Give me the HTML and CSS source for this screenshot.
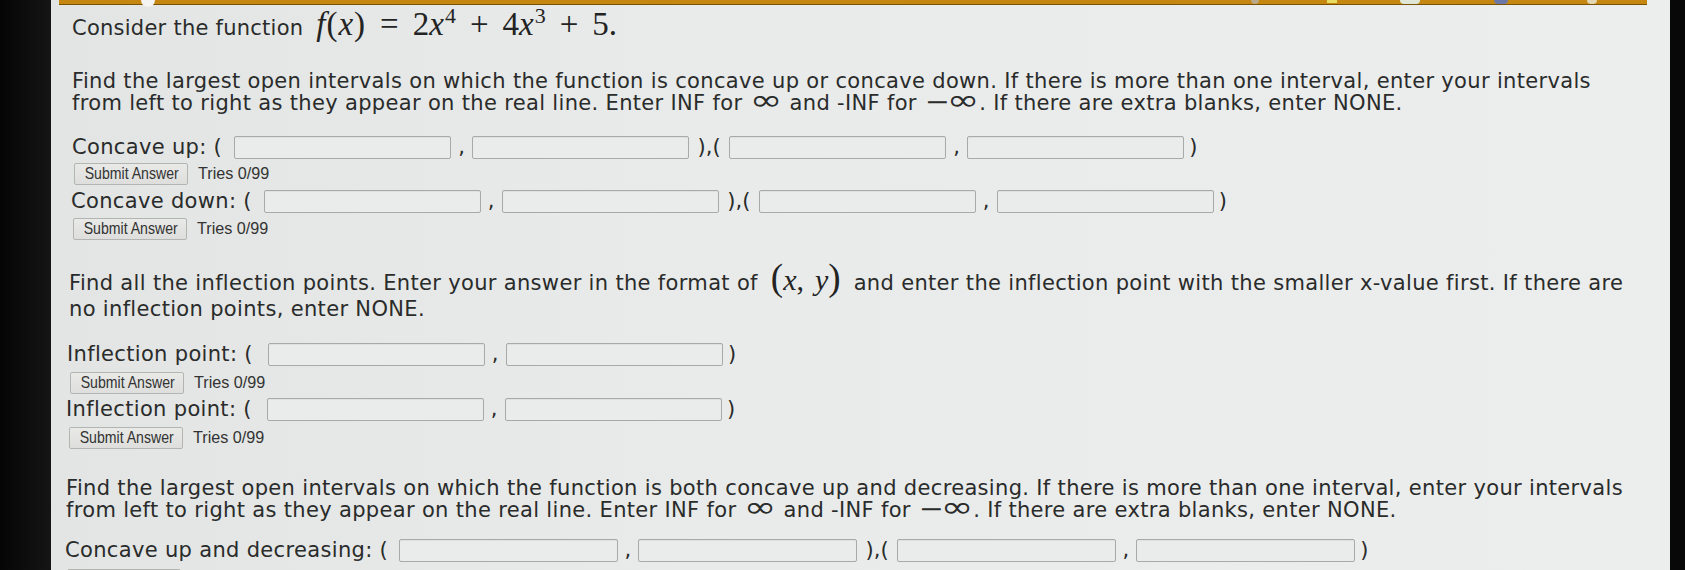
FILE: index.html
```html
<!DOCTYPE html>
<html>
<head>
<meta charset="utf-8">
<link rel="stylesheet" href="styles.css">
</head>
<body>
<div class="screen">
  <div class="bezel-left"></div>
  <div class="page">
    <div class="topbar">
      <span class="peek peek-white"></span>
      <span class="peek peek-grey"></span>
      <span class="peek peek-yellow"></span>
      <span class="peek peek-green"></span>
      <span class="peek peek-blue"></span>
      <span class="peek peek-cream"></span>
    </div>
    <div class="content">
      <p class="intro">Consider the function <span class="math"><span class="mi">f</span><span class="paren">(</span><span class="mi">x</span><span class="paren">)</span><span class="op">=</span>2<span class="mi">x</span><sup>4</sup><span class="op">+</span>4<span class="mi">x</span><sup>3</sup><span class="op">+</span>5.</span></p>

      <p class="para para-1">Find the largest open intervals on which the function is concave up or concave down. If there is more than one interval, enter your intervals<br>from left to right as they appear on the real line. Enter INF for <span class="inf">∞</span> and -INF for <span class="neg">−</span><span class="inf inf-neg">∞</span>. If there are extra blanks, enter NONE.</p>

      <div class="row r-up"><span class="label">Concave up: (</span><span class="box"></span><span class="sep">,</span><span class="box"></span><span class="sep2">),(</span><span class="box"></span><span class="sep">,</span><span class="box"></span><span class="close">)</span></div>
      <div class="submit s1"><button class="btn"><span class="btn-text">Submit Answer</span></button><span class="tries">Tries 0/99</span></div>

      <div class="row r-down"><span class="label">Concave down: (</span><span class="box"></span><span class="sep">,</span><span class="box"></span><span class="sep2">),(</span><span class="box"></span><span class="sep">,</span><span class="box"></span><span class="close">)</span></div>
      <div class="submit s2"><button class="btn"><span class="btn-text">Submit Answer</span></button><span class="tries">Tries 0/99</span></div>

      <p class="para para-2">Find all the inflection points. Enter your answer in the format of <span class="math mxy"><span class="big">(</span><span class="mi">x</span>,<span class="comma-sp"></span><span class="mi">y</span><span class="big">)</span></span> and enter the inflection point with the smaller x-value first. If there are<br>no inflection points, enter NONE.</p>

      <div class="row r-inf1"><span class="label">Inflection point: (</span><span class="box"></span><span class="sep">,</span><span class="box"></span><span class="close">)</span></div>
      <div class="submit s3"><button class="btn"><span class="btn-text">Submit Answer</span></button><span class="tries">Tries 0/99</span></div>

      <div class="row r-inf2"><span class="label">Inflection point: (</span><span class="box"></span><span class="sep">,</span><span class="box"></span><span class="close">)</span></div>
      <div class="submit s4"><button class="btn"><span class="btn-text">Submit Answer</span></button><span class="tries">Tries 0/99</span></div>

      <p class="para para-3">Find the largest open intervals on which the function is both concave up and decreasing. If there is more than one interval, enter your intervals<br>from left to right as they appear on the real line. Enter INF for <span class="inf">∞</span> and -INF for <span class="neg">−</span><span class="inf inf-neg">∞</span>. If there are extra blanks, enter NONE.</p>

      <div class="row r-cud"><span class="label">Concave up and decreasing: (</span><span class="box"></span><span class="sep">,</span><span class="box"></span><span class="sep2">),(</span><span class="box"></span><span class="sep">,</span><span class="box"></span><span class="close">)</span></div>
      <div class="submit s5"><button class="btn"><span class="btn-text">Submit Answer</span></button><span class="tries">Tries 0/99</span></div>
    </div>
  </div>
  <div class="bezel-right"></div>
</div>
</body>
</html>
```

FILE: styles.css
```css
html, body {
  margin: 0;
  padding: 0;
  background: #0a0a0a;
  overflow: hidden;
}
.screen {
  display: flex;
  width: 1685px;
  height: 570px;
  overflow: hidden;
}
.bezel-left {
  width: 51px;
  flex: none;
  background: linear-gradient(90deg, #050505, #151515);
}
.bezel-right {
  width: 15px;
  flex: none;
  background: #080808;
}
.page {
  flex: 1;
  background: linear-gradient(90deg, #e2e5e3 0%, #e8ebe9 40%, #eceeed 100%);
  color: #2a2b2b;
  font-family: "DejaVu Sans", Verdana, sans-serif;
  font-size: 21px;
  letter-spacing: 0.33px;
  overflow: hidden;
}
.topbar {
  position: relative;
  margin-left: 8px;
  width: 1588px;
  height: 4px;
  background: #c5870f;
  border-bottom: 1px solid #7a5204;
}
.peek {
  position: absolute;
  top: 0;
  height: 4px;
  width: 14px;
  border-radius: 0 0 7px 7px;
}
.peek-white { background: #f4f4f2; left: 82px; height: 7px; border-radius: 0 0 8px 8px; width: 14px; }
.peek-grey { background: #b9a98a; left: 1192px; width: 8px; }
.peek-yellow { background: #e8dc63; left: 1268px; width: 10px; height: 3px; border-radius: 0; }
.peek-green { background: #dfe8d6; left: 1341px; width: 20px; }
.peek-blue { background: #6b77a8; left: 1435px; width: 14px; }
.peek-cream { background: #e3d6b4; left: 1528px; width: 10px; }
.content {
  padding-left: 21px;
  padding-right: 10px;
  white-space: nowrap;
}
p {
  margin: 0;
}
.intro {
  margin-top: 3px;
  line-height: 32px;
  height: 32px;
  letter-spacing: 0.25px;
}
.math {
  font-family: "Liberation Serif", "Times New Roman", serif;
  font-size: 33px;
  letter-spacing: 0;
  color: #232323;
  margin-left: 6px;
}
.math .mi {
  font-style: italic;
}
.math .paren {
  margin: 0 1px;
}
.math sup {
  font-size: 22px;
  vertical-align: 12px;
  line-height: 0;
  margin-left: 1px;
}
.math .op {
  margin: 0 14px;
}
.para {
  line-height: 22px;
}
.para-1 { margin-top: 30px; }
.para-2 { margin-top: 28px; line-height: 26px; margin-left: -3px; }
.para-3 { margin-top: 28px; margin-left: -6px; }
.mxy {
  font-size: 30px;
  margin: 0 6px 0 6px;
  line-height: 20px;
}
.mxy .big {
  font-size: 37px;
  font-style: normal;
}
.comma-sp {
  display: inline-block;
  width: 11px;
}
.inf {
  display: inline-block;
  font-family: "DejaVu Sans", sans-serif;
  font-size: 29px;
  letter-spacing: 0;
  transform: scaleX(1.35);
  margin: 0 4px 0 5px;
  line-height: 16px;
}
.inf-neg {
  margin-left: 4px;
}
.neg {
  display: inline-block;
  letter-spacing: 0;
  font-size: 24px;
  line-height: 16px;
  margin-left: 3px;
  transform: scaleX(1.25);
}
.row {
  display: flex;
  align-items: center;
  height: 23px;
  line-height: 23px;
}
.label {
  margin-right: 12px;
}
.box {
  width: 215px;
  height: 21px;
  border: 1px solid #a6aaa8;
  border-radius: 2px;
  background: #e9ecea;
  box-shadow: inset 0 1px 1px rgba(0,0,0,0.05);
  flex: none;
}
.sep {
  width: 21px;
  text-align: center;
  flex: none;
}
.sep2 {
  width: 40px;
  text-align: center;
  letter-spacing: 0;
  flex: none;
}
.close {
  margin-left: 5px;
}
.submit {
  display: flex;
  align-items: center;
  height: 22px;
}
.btn {
  height: 22px;
  width: 114px;
  padding: 0;
  margin: 0 10px 0 2px;
  font-family: "Liberation Sans", Arial, sans-serif;
  font-size: 17px;
  letter-spacing: 0;
  color: #333;
  background: linear-gradient(#e9eae8, #dedfdd);
  border: 1px solid #b3b5b3;
  border-radius: 2px;
  overflow: hidden;
  white-space: nowrap;
}
.btn-text {
  display: inline-block;
  transform: scaleX(0.83);
}
.tries {
  display: inline-block;
  font-family: "Liberation Sans", Arial, sans-serif;
  font-size: 17px;
  letter-spacing: 0;
  color: #333;
  transform: scaleX(0.95);
  transform-origin: left center;
}
.r-up { margin-top: 22px; }
.s1 { margin-top: 4px; }
.r-down { margin-top: 5px; }
.r-down, .s2 { margin-left: -1px; }
.s2 { margin-top: 5px; }
.r-inf1 { margin-top: 21px; margin-left: -5px; }
.r-inf1 .label, .r-inf2 .label { margin-right: 15px; }
.s3 { margin-top: 6px; margin-left: -4px; }
.r-inf2 { margin-top: 4px; margin-left: -6px; }
.s4 { margin-top: 6px; margin-left: -5px; }
.r-cud { margin-top: 18px; margin-left: -7px; }
.r-cud .label { margin-right: 11px; }
.r-cud .box { width: 217px; }
.r-cud .sep { width: 20px; }
.s5 { margin-top: 7px; margin-left: -7px; }
```
